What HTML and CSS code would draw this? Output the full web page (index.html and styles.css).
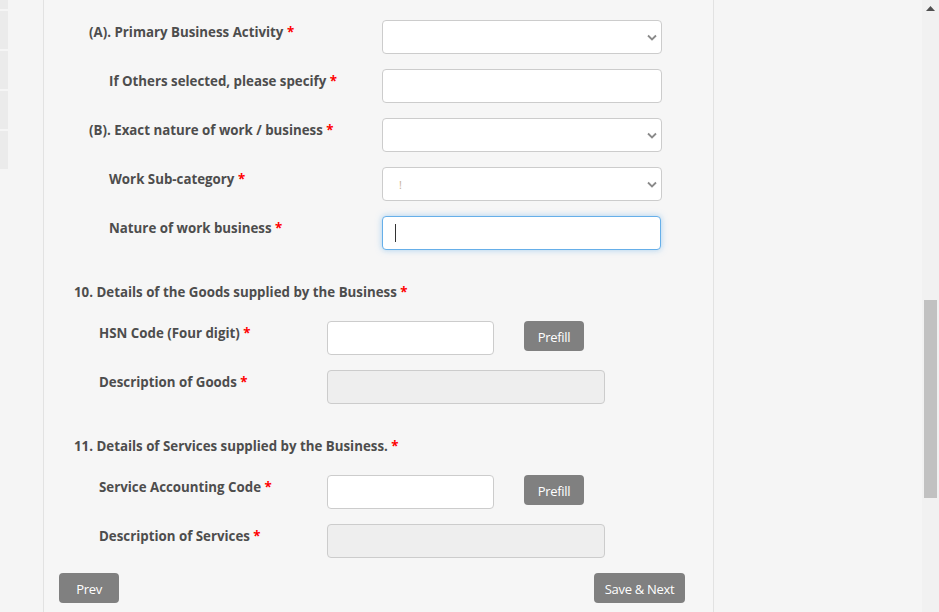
FILE: index.html
```html
<!DOCTYPE html>
<html>
<head>
<meta charset="utf-8">
<link rel="stylesheet" href="styles.css">
</head>
<body>
<div class="page">
  <div class="sidebar">
    <div class="sb-block sb-top"></div>
    <div class="sb-block"></div>
    <div class="sb-block"></div>
    <div class="sb-block"></div>
    <div class="sb-block"></div>
  </div>
  <div class="gutter"></div>
  <main class="panel">
    <div class="row row-a">
      <label class="lbl lbl-a">(A). Primary Business Activity <span class="req">*</span></label>
      <div class="ctl select"><span class="val"></span><svg class="chev" width="10" height="7" viewBox="0 0 10 7"><path d="M1 1.5 L5 5.5 L9 1.5" fill="none" stroke="#8a8a8a" stroke-width="1.8"/></svg></div>
    </div>
    <div class="row row-a">
      <label class="lbl lbl-sub">If Others selected, please specify <span class="req">*</span></label>
      <div class="ctl input"></div>
    </div>
    <div class="row row-a">
      <label class="lbl lbl-a">(B). Exact nature of work / business <span class="req">*</span></label>
      <div class="ctl select"><span class="val"></span><svg class="chev" width="10" height="7" viewBox="0 0 10 7"><path d="M1 1.5 L5 5.5 L9 1.5" fill="none" stroke="#8a8a8a" stroke-width="1.8"/></svg></div>
    </div>
    <div class="row row-a">
      <label class="lbl lbl-sub">Work Sub-category <span class="req">*</span></label>
      <div class="ctl select"><span class="val faint">!</span><svg class="chev" width="10" height="7" viewBox="0 0 10 7"><path d="M1 1.5 L5 5.5 L9 1.5" fill="none" stroke="#8a8a8a" stroke-width="1.8"/></svg></div>
    </div>
    <div class="row row-a">
      <label class="lbl lbl-sub">Nature of work business <span class="req">*</span></label>
      <div class="ctl input focus"><span class="caret"></span></div>
    </div>

    <h3 class="heading">10. Details of the Goods supplied by the Business <span class="req">*</span></h3>
    <div class="row row-b">
      <label class="lbl lbl-b">HSN Code (Four digit) <span class="req">*</span></label>
      <div class="ctl input short"></div>
      <button class="btn prefill">Prefill</button>
    </div>
    <div class="row row-b">
      <label class="lbl lbl-b">Description of Goods <span class="req">*</span></label>
      <div class="ctl input disabled"></div>
    </div>

    <h3 class="heading">11. Details of Services supplied by the Business. <span class="req">*</span></h3>
    <div class="row row-b">
      <label class="lbl lbl-b">Service Accounting Code <span class="req">*</span></label>
      <div class="ctl input short"></div>
      <button class="btn prefill">Prefill</button>
    </div>
    <div class="row row-b">
      <label class="lbl lbl-b">Description of Services <span class="req">*</span></label>
      <div class="ctl input disabled"></div>
    </div>

    <div class="nav">
      <button class="btn nav-btn">Prev</button>
      <button class="btn nav-btn">Save &amp; Next</button>
    </div>
  </main>
  <div class="rest"></div>
  <div class="scrollbar">
    <svg class="sb-arrow" width="9" height="5" viewBox="0 0 9 5"><path d="M0 5 L4.5 0 L9 5 Z" fill="#505050"/></svg>
    <div class="sb-thumb"></div>
  </div>
</div>
</body>
</html>
```

FILE: styles.css
```css
html, body {
  margin: 0;
  padding: 0;
  height: 100%;
  overflow: hidden;
}
body {
  background: #f5f5f5;
  font-family: "Open Sans", "Liberation Sans", sans-serif;
  color: #4d4d4d;
}
.page {
  display: flex;
  height: 612px;
  width: 939px;
}
.sidebar {
  width: 8px;
  display: flex;
  flex-direction: column;
  gap: 2px;
}
.sb-block {
  height: 38px;
  background: #ebebeb;
}
.sb-block.sb-top {
  height: 9px;
}
.gutter {
  width: 35px;
}
.panel {
  border-left: 1px solid #e2e2e2;
  border-right: 1px solid #e2e2e2;
  background: #f6f6f6;
  padding: 20px 0 0 30px;
  box-sizing: border-box;
  width: 671px;
  display: flex;
  flex-direction: column;
}
.row {
  display: flex;
  align-items: flex-start;
  height: 34px;
  margin-bottom: 15px;
}
.lbl {
  font-size: 13.3px;
  font-weight: 700;
  line-height: 20px;
  padding-top: 2px;
  box-sizing: border-box;
  white-space: nowrap;
}
.lbl-a {
  padding-left: 15px;
  width: 308px;
}
.lbl-sub {
  padding-left: 35px;
  width: 308px;
}
.lbl-b {
  padding-left: 25px;
  width: 253px;
}
.req {
  color: #ff0000;
}
.ctl {
  height: 34px;
  box-sizing: border-box;
  border: 1px solid #cccccc;
  border-radius: 4px;
  background: #ffffff;
  width: 280px;
}
.select {
  display: flex;
  align-items: center;
  justify-content: space-between;
  padding: 0 4px 0 16px;
}
.val {
  font-size: 11px;
}
.faint {
  color: #c9b497;
}
.chev {
  display: block;
}
.input.focus {
  border-color: #66afe9;
  box-shadow: 0 0 6px rgba(102, 175, 233, 0.55);
  width: 279px;
  display: flex;
  align-items: center;
  padding-left: 12px;
}
.caret {
  width: 1px;
  height: 18px;
  background: #333333;
}
.input.short {
  width: 167px;
}
.input.disabled {
  width: 278px;
  background: #eeeeee;
}
.heading {
  margin: 17px 0 19px 0;
  font-size: 13.3px;
  font-weight: 700;
  line-height: 20px;
}
.btn {
  font-family: "Open Sans", "Liberation Sans", sans-serif;
  font-size: 13px;
  color: #ffffff;
  background: #808080;
  border: none;
  border-radius: 4px;
  height: 30px;
  padding: 2px 0 0 0;
  letter-spacing: -0.3px;
}
.prefill {
  width: 60px;
  margin-left: 30px;
}
.nav {
  display: flex;
  justify-content: space-between;
  margin-left: -15px;
  width: 626px;
}
.nav-btn:first-child {
  width: 60px;
}
.nav-btn:last-child {
  width: 91px;
}
.rest {
  flex: 1;
}
.scrollbar {
  width: 17px;
  background: #f1f1f1;
  display: flex;
  flex-direction: column;
  align-items: center;
}
.sb-arrow {
  margin-top: 6px;
  display: block;
}
.sb-thumb {
  margin-top: 289px;
  width: 13px;
  height: 198px;
  background: #c1c1c1;
}
```
